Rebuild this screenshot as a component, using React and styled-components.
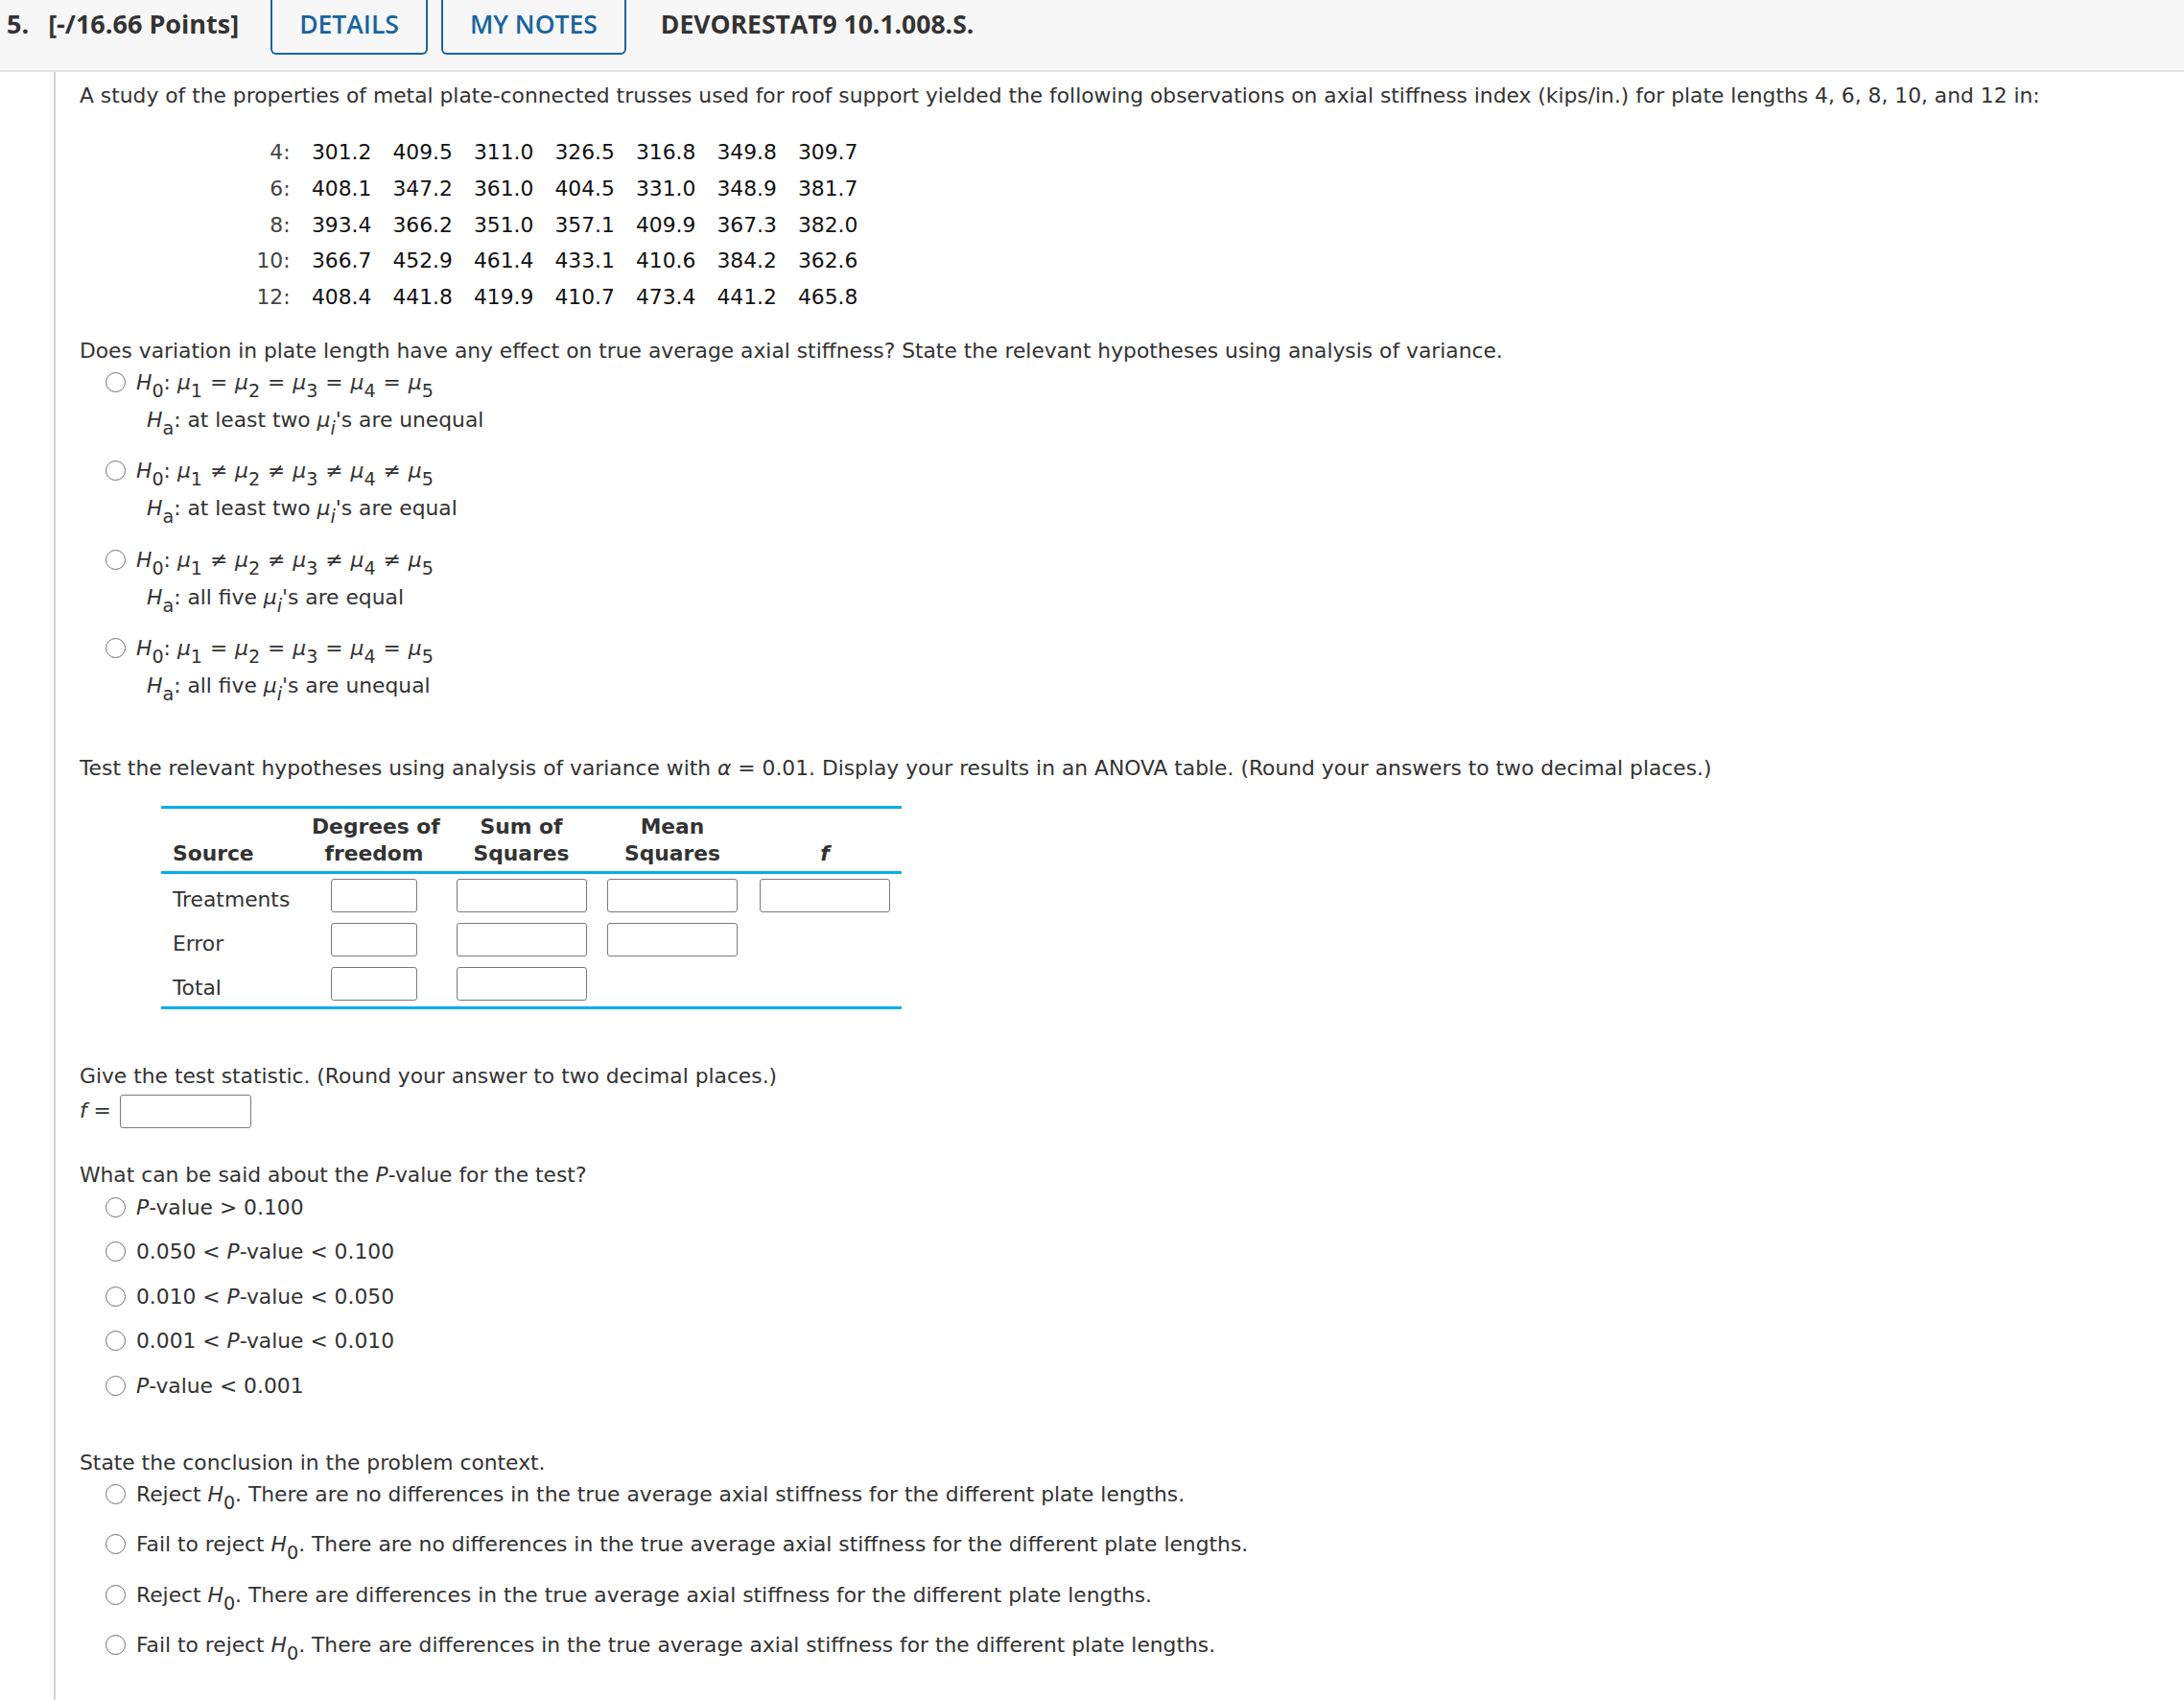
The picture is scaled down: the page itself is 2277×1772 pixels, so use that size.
import React from "react";
import styled, { createGlobalStyle } from "styled-components";

const GlobalStyle = createGlobalStyle`
  html, body { margin: 0; padding: 0; background: #ffffff; }
  body {
    font-family: "DejaVu Sans", Verdana, sans-serif;
    font-size: 21.8px;
    color: #333333;
  }
  * { box-sizing: border-box; }
`;

const Page = styled.div`
  min-height: 100vh;
  display: flex;
  flex-direction: column;
`;

const Header = styled.header`
  display: flex;
  align-items: flex-start;
  height: 75px;
  padding-left: 7px;
  background: #f7f7f7;
  border-bottom: 2px solid #e2e2e2;
  font-family: "Open Sans", "Liberation Sans", sans-serif;
`;

const HeaderTitle = styled.div`
  font-size: ${(p) => p.$size || 26.5}px;
  font-weight: 700;
  line-height: 36px;
  padding-top: 7px;
  color: #333333;
  white-space: nowrap;
  margin-right: ${(p) => p.$gap || 0}px;
`;

const QNumber = styled.span`
  margin-right: 20px;
`;

const TabButton = styled.button`
  height: 57px;
  margin-right: ${(p) => p.$gap || 0}px;
  padding: 7px 28px 14px;
  background: transparent;
  border: 2.5px solid #17659f;
  border-top: none;
  border-radius: 0 0 6px 6px;
  font-family: "Open Sans", "Liberation Sans", sans-serif;
  font-size: 26.5px;
  font-weight: 600;
  line-height: 36px;
  color: #17659f;
  cursor: pointer;
`;

const Main = styled.main`
  flex: 1;
  margin-left: 56px;
  border-left: 2px solid #d4d4d4;
  padding: 9px 0 0 25px;
`;

const Para = styled.p`
  margin: ${(p) => p.$mt || 0}px 0 0;
  line-height: 32px;
  white-space: nowrap;
`;

const DataGrid = styled.div`
  display: grid;
  grid-template-columns: 40px repeat(7, 64.5px);
  column-gap: 20px;
  grid-auto-rows: 37.7px;
  align-items: center;
  margin: 24px 0 0 182px;
`;

const DataLabel = styled.div`
  text-align: right;
  padding-right: 2.5px;
  color: #444444;
`;

const DataValue = styled.div`
  color: #111111;
`;

const OptionList = styled.div`
  display: flex;
  flex-direction: column;
  gap: ${(p) => p.$gap}px;
  margin-top: ${(p) => p.$mt || 0}px;
  padding-left: 27px;
`;

const Option = styled.label`
  display: flex;
  align-items: flex-start;
  gap: 11px;
  cursor: pointer;
`;

const Radio = styled.span`
  flex: none;
  width: 21px;
  height: 21px;
  margin-top: 5px;
  border: 1.7px solid #707070;
  border-radius: 50%;
  background: #ffffff;
`;

const OptionBody = styled.div`
  display: flex;
  flex-direction: column;
  gap: 7px;
`;

const Line = styled.div`
  line-height: 32px;
  white-space: nowrap;
  padding-left: ${(p) => p.$indent || 0}px;
`;

const Var = styled.i`
  font-style: italic;
`;

const Sub = styled.sub`
  font-size: 0.88em;
  vertical-align: -0.42em;
  line-height: 0;
`;

const Op = styled.span`
  margin: 0 1px;
`;

const AnovaTable = styled.table`
  margin: 23px 0 0 85px;
  width: 772px;
  table-layout: fixed;
  border-collapse: separate;
  border-spacing: 0;
  border-top: 3px solid #00aeef;
  border-bottom: 3px solid #00aeef;
`;

const Th = styled.th`
  width: ${(p) => p.$w}px;
  padding: 5px 10px 4px ${(p) => (p.$first ? 12 : 10)}px;
  text-align: ${(p) => (p.$first ? "left" : "center")};
  vertical-align: bottom;
  font-weight: 700;
  line-height: 28px;
  color: #333333;
  border-bottom: 3px solid #00aeef;
  white-space: nowrap;
`;

const Td = styled.td`
  padding: ${(p) => (p.$first ? "10px 10px 1px 12px" : "5px 10px 6px")};
  text-align: ${(p) => (p.$first ? "left" : "center")};
  vertical-align: middle;
  line-height: 30px;
  height: 46px;
  white-space: nowrap;
`;

const AnswerInput = styled.input`
  display: block;
  width: ${(p) => p.$w || 136}px;
  height: 35px;
  margin: 0 auto;
  padding: 0 6px;
  border: 1px solid #7b7b7b;
  border-radius: 3px;
  background: #ffffff;
  font: inherit;
`;

const FRow = styled.div`
  display: flex;
  align-items: center;
  gap: 9px;
  margin-top: 3px;
  line-height: 32px;
`;

const FInput = styled(AnswerInput)`
  margin: 0;
  width: 137px;
`;

const dataRows = [
  ["4:", ["301.2", "409.5", "311.0", "326.5", "316.8", "349.8", "309.7"]],
  ["6:", ["408.1", "347.2", "361.0", "404.5", "331.0", "348.9", "381.7"]],
  ["8:", ["393.4", "366.2", "351.0", "357.1", "409.9", "367.3", "382.0"]],
  ["10:", ["366.7", "452.9", "461.4", "433.1", "410.6", "384.2", "362.6"]],
  ["12:", ["408.4", "441.8", "419.9", "410.7", "473.4", "441.2", "465.8"]],
];

const Mu = ({ n }) => (
  <>
    <Var>μ</Var>
    <Sub>{n}</Sub>
  </>
);

const H = ({ s }) => (
  <>
    <Var>H</Var>
    <Sub>{s}</Sub>
  </>
);

const NullLine = ({ op }) => (
  <Line>
    <H s="0" />: <Mu n="1" /> <Op>{op}</Op> <Mu n="2" /> <Op>{op}</Op> <Mu n="3" /> <Op>{op}</Op>{" "}
    <Mu n="4" /> <Op>{op}</Op> <Mu n="5" />
  </Line>
);

const AltLine = ({ pre, post }) => (
  <Line $indent={11}>
    <H s="a" />: {pre}{" "}
    <Var>μ</Var>
    <Sub>
      <Var>i</Var>
    </Sub>
    's {post}
  </Line>
);

const hypotheses = [
  { op: "=", pre: "at least two", post: "are unequal" },
  { op: "≠", pre: "at least two", post: "are equal" },
  { op: "≠", pre: "all five", post: "are equal" },
  { op: "=", pre: "all five", post: "are unequal" },
];

const pOptions = [
  <>
    <Var>P</Var>-value &gt; 0.100
  </>,
  <>
    0.050 &lt; <Var>P</Var>-value &lt; 0.100
  </>,
  <>
    0.010 &lt; <Var>P</Var>-value &lt; 0.050
  </>,
  <>
    0.001 &lt; <Var>P</Var>-value &lt; 0.010
  </>,
  <>
    <Var>P</Var>-value &lt; 0.001
  </>,
];

const conclusions = [
  ["Reject", "There are no differences in the true average axial stiffness for the different plate lengths."],
  ["Fail to reject", "There are no differences in the true average axial stiffness for the different plate lengths."],
  ["Reject", "There are differences in the true average axial stiffness for the different plate lengths."],
  ["Fail to reject", "There are differences in the true average axial stiffness for the different plate lengths."],
];

const colWidths = [147, 150, 157, 158, 160];

const anovaRows = [
  { name: "Treatments", cells: 4 },
  { name: "Error", cells: 3 },
  { name: "Total", cells: 2 },
];

export default function App() {
  return (
    <Page>
      <GlobalStyle />
      <Header>
        <HeaderTitle $gap={33} $size={27}>
          <QNumber>5.</QNumber>[-/16.66 Points]
        </HeaderTitle>
        <TabButton $gap={14}>DETAILS</TabButton>
        <TabButton $gap={36}>MY NOTES</TabButton>
        <HeaderTitle>DEVORESTAT9 10.1.008.S.</HeaderTitle>
      </Header>
      <Main>
        <Para>
          A study of the properties of metal plate-connected trusses used for roof support yielded the
          following observations on axial stiffness index (kips/in.) for plate lengths 4, 6, 8, 10, and 12 in:
        </Para>
        <DataGrid>
          {dataRows.map(([label, values]) => (
            <React.Fragment key={label}>
              <DataLabel>{label}</DataLabel>
              {values.map((v, i) => (
                <DataValue key={i}>{v}</DataValue>
              ))}
            </React.Fragment>
          ))}
        </DataGrid>

        <Para $mt={21.5}>
          Does variation in plate length have any effect on true average axial stiffness? State the relevant
          hypotheses using analysis of variance.
        </Para>
        <OptionList $gap={21.5} $mt={1}>
          {hypotheses.map((h, i) => (
            <Option key={i}>
              <Radio />
              <OptionBody>
                <NullLine op={h.op} />
                <AltLine pre={h.pre} post={h.post} />
              </OptionBody>
            </Option>
          ))}
        </OptionList>

        <Para $mt={53.5}>
          Test the relevant hypotheses using analysis of variance with <Var>α</Var> = 0.01. Display your
          results in an ANOVA table. (Round your answers to two decimal places.)
        </Para>
        <AnovaTable>
          <thead>
            <tr>
              <Th $first $w={colWidths[0]}>Source</Th>
              <Th $w={colWidths[1]}>
                Degrees of
                <br />
                freedom
              </Th>
              <Th $w={colWidths[2]}>
                Sum of
                <br />
                Squares
              </Th>
              <Th $w={colWidths[3]}>
                Mean
                <br />
                Squares
              </Th>
              <Th $w={colWidths[4]}>
                <Var>f</Var>
              </Th>
            </tr>
          </thead>
          <tbody>
            {anovaRows.map((r) => (
              <tr key={r.name}>
                <Td $first>{r.name}</Td>
                {[0, 1, 2, 3].map((c) => (
                  <Td key={c}>{c < r.cells ? <AnswerInput $w={c === 0 ? 90 : 136} /> : null}</Td>
                ))}
              </tr>
            ))}
          </tbody>
        </AnovaTable>

        <Para $mt={54}>Give the test statistic. (Round your answer to two decimal places.)</Para>
        <FRow>
          <span>
            <Var>f</Var> =
          </span>
          <FInput />
        </FRow>

        <Para $mt={33}>
          What can be said about the <Var>P</Var>-value for the test?
        </Para>
        <OptionList $gap={14.5} $mt={2}>
          {pOptions.map((o, i) => (
            <Option key={i}>
              <Radio />
              <Line>{o}</Line>
            </Option>
          ))}
        </OptionList>

        <Para $mt={48}>State the conclusion in the problem context.</Para>
        <OptionList $gap={20.3} $mt={1}>
          {conclusions.map(([verb, rest], i) => (
            <Option key={i}>
              <Radio />
              <Line>
                {verb} <H s="0" />. {rest}
              </Line>
            </Option>
          ))}
        </OptionList>
      </Main>
    </Page>
  );
}
